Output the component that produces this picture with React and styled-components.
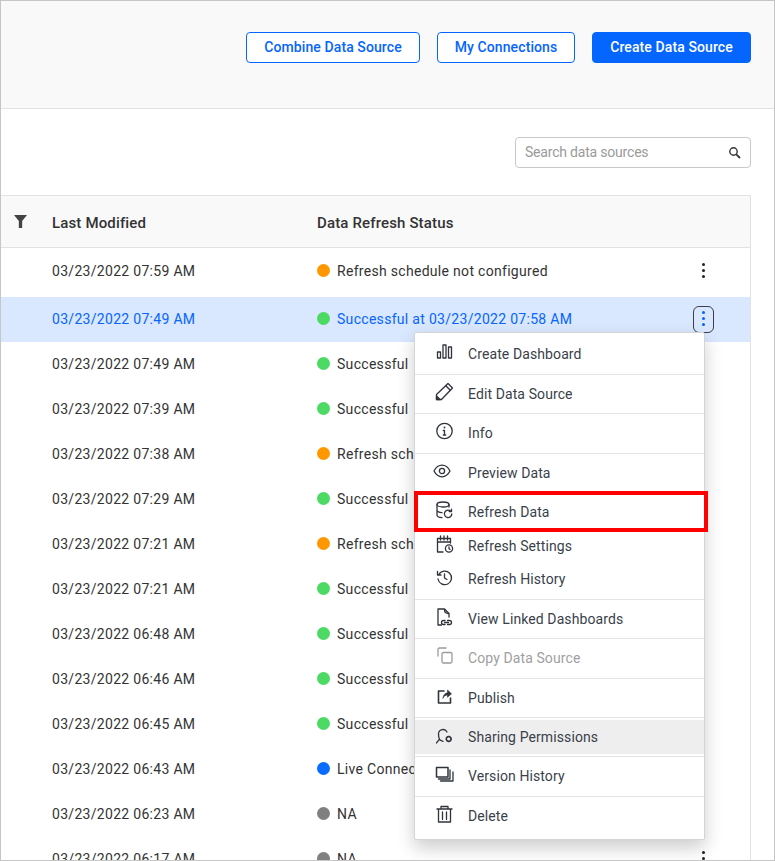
import styled, { createGlobalStyle } from 'styled-components';

const GlobalStyle = createGlobalStyle`
  html, body {
    margin: 0;
    padding: 0;
    background: #fff;
    font-family: Roboto, "Liberation Sans", sans-serif;
    color: #333;
  }
  * { box-sizing: border-box; }
`;

const Frame = styled.div`
  position: relative;
  width: 775px;
  height: 861px;
  border: 1px solid #c6c6c6;
  overflow: hidden;
  background: #fff;
`;

const TopBar = styled.div`
  height: 108px;
  padding: 31px 23px 0 0;
  display: flex;
  justify-content: flex-end;
  align-items: flex-start;
  gap: 17px;
  background: #f9f9f9;
  border-bottom: 1px solid #e2e2e2;
`;

const Button = styled.button`
  height: 31px;
  width: ${(p) => p.$width}px;
  padding: 0 0 2px;
  border: 1px solid #0565ff;
  border-radius: 4px;
  background: ${(p) => (p.$primary ? '#0565ff' : '#fff')};
  color: ${(p) => (p.$primary ? '#fff' : '#0565ff')};
  font: 500 14px Roboto, sans-serif;
  letter-spacing: 0.1px;
`;

const SearchRow = styled.div`
  display: flex;
  justify-content: flex-end;
  padding: 28px 23px 27px 0;
`;

const SearchBox = styled.div`
  width: 236px;
  height: 31px;
  padding: 0 9px 2px;
  display: flex;
  align-items: center;
  justify-content: space-between;
  border: 1px solid #c9c9c9;
  border-radius: 4px;
  color: #9a9a9a;
  font-size: 14px;
  letter-spacing: -0.2px;

  svg {
    margin-top: 2px;
  }
`;

const Table = styled.div`
  margin-right: 23px;
  border-top: 1px solid #e2e2e2;
  border-right: 1px solid #e2e2e2;
`;

const HeadRow = styled.div`
  height: 52px;
  padding-top: 3px;
  display: grid;
  grid-template-columns: 51px 265px 1fr 94px;
  align-items: center;
  background: #f9f9f9;
  border-bottom: 1px solid #e2e2e2;
  font-size: 15px;
  font-weight: 500;
  letter-spacing: 0.15px;
  color: #333;
`;

const FilterCell = styled.div`
  padding: 0 0 3px 13px;
  display: flex;
`;

const Row = styled.div`
  height: ${(p) => (p.$first ? 49 : 45)}px;
  padding-bottom: ${(p) => (p.$first ? 4 : 2)}px;
  display: grid;
  grid-template-columns: 51px 265px 1fr 94px;
  align-items: center;
  font-size: 14px;
  letter-spacing: 0.3px;
  color: ${(p) => (p.$selected ? '#0565ff' : '#333')};
  background: ${(p) => (p.$selected ? '#d9e7ff' : '#fff')};
`;

const Status = styled.div`
  display: flex;
  align-items: center;
  gap: 7px;
  white-space: nowrap;
  overflow: hidden;
`;

const Dot = styled.span`
  width: 13px;
  height: 13px;
  flex: none;
  border-radius: 50%;
  background: ${(p) => p.$color};
`;

const Kebab = styled.div`
  justify-self: center;
  width: 21px;
  height: 27px;
  padding-bottom: 3px;
  display: flex;
  flex-direction: column;
  align-items: center;
  justify-content: center;
  gap: 3px;
  border: 1.5px solid ${(p) => (p.$active ? '#3a3f4a' : 'transparent')};
  border-radius: 6px;
  color: ${(p) => (p.$active ? '#0565ff' : '#222')};
  transform: translateY(1px);

  span {
    width: 3px;
    height: 3px;
    border-radius: 50%;
    background: currentColor;
  }
`;

const Menu = styled.div`
  position: absolute;
  left: 413px;
  top: 331px;
  width: 291px;
  height: 508px;
  background: #fff;
  border-radius: 2px;
  border: 1px solid #d4d4d4;
  box-shadow: 0 8px 18px rgba(0, 0, 0, 0.2);
`;

const Group = styled.div`
  height: ${(p) => p.$h}px;
  padding-top: ${(p) => p.$top || 0}px;
  border-bottom: ${(p) => (p.$last ? 'none' : '1px solid #e4e4e4')};
`;

const Item = styled.div`
  height: ${(p) => p.$h}px;
  padding-left: 20px;
  display: flex;
  align-items: center;
  gap: 13px;
  font-size: 14px;
  letter-spacing: 0.1px;
  color: ${(p) => (p.$disabled ? '#a0a0a0' : '#3a3f4a')};
  background: ${(p) => (p.$hover ? '#eeeeee' : 'transparent')};
`;

const IconBox = styled.svg`
  width: 20px;
  height: 20px;
  flex: none;
  fill: none;
  overflow: visible;
  stroke: currentColor;
  stroke-width: 1.3;
  stroke-linecap: round;
  stroke-linejoin: round;
  color: ${(p) => (p.$disabled ? '#9a9a9a' : '#2f333a')};
  transform: translateY(-3px);
`;

const Highlight = styled.div`
  position: absolute;
  left: 413px;
  top: 490px;
  width: 294px;
  height: 41px;
  border: 4px solid #ff0000;
`;

const icons = {
  chart: (
    <>
      <rect x="2.5" y="11" width="3" height="6" />
      <rect x="8" y="4" width="3" height="13" />
      <rect x="13.5" y="6" width="3" height="11" />
    </>
  ),
  pencil: (
    <>
      <path d="M13 2.5L17.5 7 6.5 18.5H1.5V13.5z" />
      <path d="M10.8 4.8l4.5 4.500" />
      <path d="M1.5 15l3.5 3.5h-3.5z" fill="currentColor" />
    </>
  ),
  info: (
    <>
      <circle cx="9.5" cy="11" r="7.7" />
      <path d="M9.5 10.5v4.5M8.3 10.5h1.2M8.3 15h2.4" />
      <path d="M9.5 7.3v.2" strokeWidth="1.8" />
    </>
  ),
  eye: (
    <>
      <path d="M-1 11c2-3.8 4.8-5.8 8-5.8s6 2 8 5.8c-2 3.800-4.800 5.800-8 5.800S1 14.800-1 11z" />
      <circle cx="7" cy="11" r="2.6" />
    </>
  ),
  database: (
    <>
      <ellipse cx="8" cy="5.5" rx="6" ry="2.5" />
      <path d="M2 5.5V16c0 1.3 2 2.5 5 2.7M14 5.5V8M2 11c0 1.3 2 2.4 5 2.6" />
      <path d="M16.8 15a3.7 3.7 0 1 1-1-2.7" />
      <path d="M16.5 10.2v2.3h-2.3" />
    </>
  ),
  calendar: (
    <>
      <path d="M8 19H2.5V5.5h13V10" />
      <path d="M2.5 9h13M5.5 3v4M9 3v4M12.5 3v4" />
      <circle cx="14" cy="15.5" r="3.6" />
      <path d="M14 13.8v1.8l1 .8" />
    </>
  ),
  history: (
    <>
      <path d="M3 13a6.8 6.8 0 1 0 .8-4.500" />
      <path d="M2.5 5.5V9H6" />
      <path d="M9.5 8v4l2.5 1.5" />
    </>
  ),
  linked: (
    <>
      <path d="M6.5 19H3V3h6.5l4.500 4.500V11" />
      <path d="M9.5 3.5c0 2.5 1 4 4 4" />
      <path d="M10 14.5H8.5a2 2 0 0 0 0 4H10M12.5 14.5h2a2 2 0 0 1 0 4h-2M9.5 16.5h4" />
    </>
  ),
  copy: (
    <>
      <rect x="7" y="7.5" width="10" height="10.5" rx="1.5" />
      <path d="M3 11V4.5A1.5 1.5 0 0 1 4.5 3H11" />
    </>
  ),
  publish: (
    <>
      <path d="M9 6H3.5v12h12v-5" strokeWidth="1.6" />
      <path d="M8 13c.3-3 2-5 4.5-5.300V5l4 3.800-4 3.400V10c-2 0-3.500 1.200-4.500 3z" fill="currentColor" strokeWidth="0.6" />
    </>
  ),
  sharing: (
    <>
      <path d="M1.5 19c.5-1.500 2-2.500 3-3.500-.7-1.800-1-3.500-1-5.500a4.500 4.500 0 0 1 8.500-2" />
      <path d="M4.5 15.5c1 .8 2 1.500 3.500 1.800" />
      <circle cx="13.7" cy="15" r="2.4" strokeDasharray="1.3 0.6" strokeWidth="1.7" />
    </>
  ),
  version: (
    <>
      <rect x="1.5" y="4.5" width="11.5" height="9.5" strokeWidth="1.5" />
      <path d="M3.5 16H15V7M5.5 18H18V9" />
    </>
  ),
  trash: <path d="M2 6h15M6 6V3.5h7V6M3.5 6v13h12V6M7.5 9v7.5M11.5 9v7.5" />,
};

const Icon = ({ name, disabled }) => (
  <IconBox viewBox="0 0 20 20" $disabled={disabled}>{icons[name]}</IconBox>
);

const rows = [
  ['03/23/2022 07:59 AM', '#ff9800', 'Refresh schedule not configured'],
  ['03/23/2022 07:49 AM', '#4cd964', 'Successful at 03/23/2022 07:58 AM'],
  ['03/23/2022 07:49 AM', '#4cd964', 'Successful'],
  ['03/23/2022 07:39 AM', '#4cd964', 'Successful'],
  ['03/23/2022 07:38 AM', '#ff9800', 'Refresh schedule not configured'],
  ['03/23/2022 07:29 AM', '#4cd964', 'Successful'],
  ['03/23/2022 07:21 AM', '#ff9800', 'Refresh schedule not configured'],
  ['03/23/2022 07:21 AM', '#4cd964', 'Successful'],
  ['03/23/2022 06:48 AM', '#4cd964', 'Successful'],
  ['03/23/2022 06:46 AM', '#4cd964', 'Successful'],
  ['03/23/2022 06:45 AM', '#4cd964', 'Successful'],
  ['03/23/2022 06:43 AM', '#0a6cff', 'Live Connection'],
  ['03/23/2022 06:23 AM', '#808080', 'NA'],
  ['03/23/2022 06:17 AM', '#808080', 'NA'],
];

export default function App() {
  return (
    <>
      <GlobalStyle />
      <Frame>
        <TopBar>
          <Button $width={174}>Combine Data Source</Button>
          <Button $width={138}>My Connections</Button>
          <Button $width={159} $primary>Create Data Source</Button>
        </TopBar>
        <SearchRow>
          <SearchBox>
            Search data sources
            <svg width="13" height="13" viewBox="0 0 13 13" fill="none" stroke="#333" strokeWidth="1.4">
              <circle cx="5.5" cy="5.5" r="3.7" />
              <path d="M8.3 8.3L12 12" strokeWidth="1.8" />
            </svg>
          </SearchBox>
        </SearchRow>
        <Table>
          <HeadRow>
            <FilterCell>
              <svg width="13" height="13" viewBox="0 0 14 14" fill="#444">
                <path d="M0 0h14L8.8 6.5V14H5.2V6.5z" />
              </svg>
            </FilterCell>
            <div>Last Modified</div>
            <div>Data Refresh Status</div>
          </HeadRow>
          {rows.map(([date, color, text], i) => (
            <Row key={i} $first={i === 0} $selected={i === 1}>
              <div />
              <div>{date}</div>
              <Status><Dot $color={color} />{text}</Status>
              <Kebab $active={i === 1}><span /><span /><span /></Kebab>
            </Row>
          ))}
        </Table>
        <Menu>
          <Group $h={42}><Item $h={41}><Icon name="chart" />Create Dashboard</Item></Group>
          <Group $h={39}><Item $h={38}><Icon name="pencil" />Edit Data Source</Item></Group>
          <Group $h={40}><Item $h={38}><Icon name="info" />Info</Item></Group>
          <Group $h={146}>
            <Item $h={38}><Icon name="eye" />Preview Data</Item>
            <Item $h={40}><Icon name="database" />Refresh Data</Item>
            <Item $h={28}><Icon name="calendar" />Refresh Settings</Item>
            <Item $h={37}><Icon name="history" />Refresh History</Item>
          </Group>
          <Group $h={39}><Item $h={38}><Icon name="linked" />View Linked Dashboards</Item></Group>
          <Group $h={40}><Item $h={37} $disabled><Icon name="copy" disabled />Copy Data Source</Item></Group>
          <Group $h={39}><Item $h={38}><Icon name="publish" />Publish</Item></Group>
          <Group $h={39} $top={2}><Item $h={34} $hover><Icon name="sharing" />Sharing Permissions</Item></Group>
          <Group $h={40}><Item $h={37}><Icon name="version" />Version History</Item></Group>
          <Group $h={42} $last><Item $h={37}><Icon name="trash" />Delete</Item></Group>
        </Menu>
        <Highlight />
      </Frame>
    </>
  );
}
